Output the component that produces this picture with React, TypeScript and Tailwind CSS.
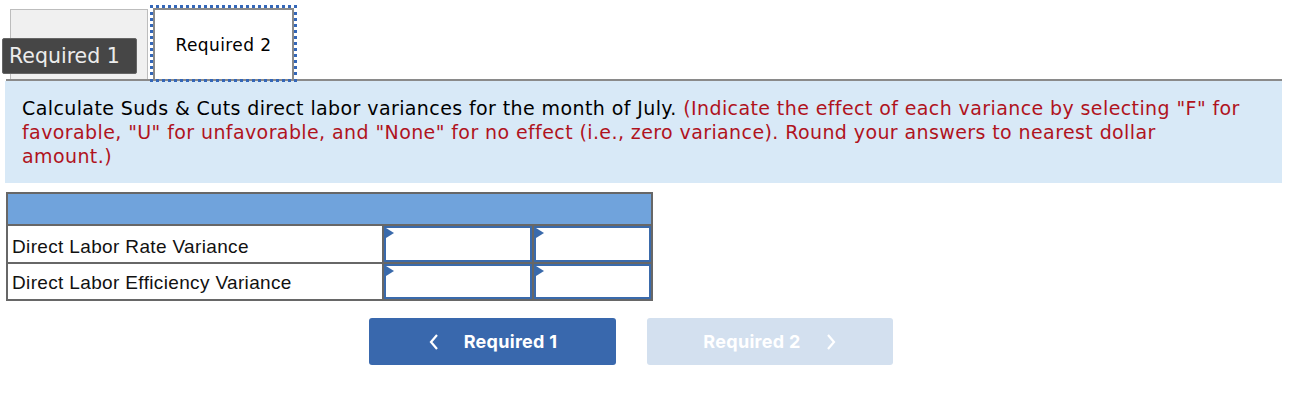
import React from "react";

function Tri() {
  return (
    <svg className="absolute left-0 top-0" width="9" height="10" viewBox="0 0 9 10">
      <polygon points="0,0 8,5 0,10" fill="#3a6aab" />
    </svg>
  );
}

function InputCell({ wide }: { wide?: boolean }) {
  return (
    <div className={wide ? "relative w-[148px] border-2 border-[#3a6aab] bg-white" : "relative w-[117px] border-2 border-[#3a6aab] bg-white"}>
      <Tri />
    </div>
  );
}

function Row({ label, last }: { label: string; last?: boolean }) {
  return (
    <div className={last ? "flex h-[35px]" : "flex h-[38px] border-b-2 border-[#676767]"}>
      <div className={last ? "w-[376px] border-r-2 border-[#676767] flex items-center pl-[4px] pt-[4px] text-[19px] tracking-[0.35px] text-[#111]" : "w-[376px] border-r-2 border-[#676767] flex items-center pl-[4px] pt-[6px] text-[19px] tracking-[0.35px] text-[#111]"}>
        {label}
      </div>
      <InputCell wide />
      <div className="w-[2px] bg-[#676767]" />
      <InputCell />
    </div>
  );
}

export default function App() {
  return (
    <div className="w-[1292px] h-[406px] bg-white font-['DejaVu_Sans',Verdana,sans-serif]">
      <div className="pt-[5px] px-[6px]">
        {/* tabs */}
        <div className="relative flex items-end gap-[5px] pl-[4px] border-b-2 border-[#8a8a8a] h-[76px] w-[1276px]">
          <div className="w-[138px] h-[70px] bg-[#f0f0f0] border border-b-0 border-[#bdbdbd]" />
          <div className="w-[141px] h-[71px] bg-white border-2 border-b-0 border-[#8a8a8a] outline-[3px] outline-dotted outline-[#3467b8] outline-offset-0 flex items-center justify-center text-[17px] tracking-[0.4px] text-black pt-[3px]">
            Required 2
          </div>
          <div className="absolute left-[-4px] top-[33px] w-[135px] h-[36px] bg-[#464646] border border-[#666] rounded-[2px] flex items-center pl-[6px] text-[20.5px] text-[#ececec]">
            Required 1
          </div>
        </div>
        {/* instructions */}
        <div className="bg-[#d8e9f7] ml-[-1px] w-[1277px] pl-[17px] pr-[38px] pt-[15px] pb-[15px] text-[19px] tracking-[0.4px] leading-[24px] text-black">
          Calculate Suds &amp; Cuts direct labor variances for the month of July.{" "}
          <span className="text-[#b0131d]">
            (Indicate the effect of each variance by selecting "F" for favorable, "U" for unfavorable, and "None" for no effect (i.e., zero variance). Round your answers to nearest dollar amount.)
          </span>
        </div>
        {/* table */}
        <div className="mt-[9px] w-[647px] border-2 border-[#676767] font-['Liberation_Sans',Arial,sans-serif]">
          <div className="h-[32px] bg-[#70a3dc] border-b-2 border-[#676767]" />
          <Row label="Direct Labor Rate Variance" />
          <Row label="Direct Labor Efficiency Variance" last />
        </div>
        {/* nav buttons */}
        <div className="mt-[17px] ml-[363px] flex gap-[31px] font-['Inter','Liberation_Sans',sans-serif]">
          <div className="w-[247px] h-[47px] rounded-[3px] bg-[#3968ad] flex items-center justify-center gap-[24px] text-white font-bold text-[18px] tracking-[0.3px]">
            <svg width="12" height="18" viewBox="0 0 12 18"><polyline points="9,2 3,9 9,16" fill="none" stroke="white" strokeWidth="2.2" /></svg>
            <span>Required 1</span>
          </div>
          <div className="w-[246px] h-[47px] rounded-[3px] bg-[#d3e0ef] flex items-center justify-center gap-[24px] text-white font-bold text-[18px] tracking-[0.3px]">
            <span>Required 2</span>
            <svg width="12" height="18" viewBox="0 0 12 18"><polyline points="3,2 9,9 3,16" fill="none" stroke="white" strokeWidth="2.2" /></svg>
          </div>
        </div>
      </div>
    </div>
  );
}
